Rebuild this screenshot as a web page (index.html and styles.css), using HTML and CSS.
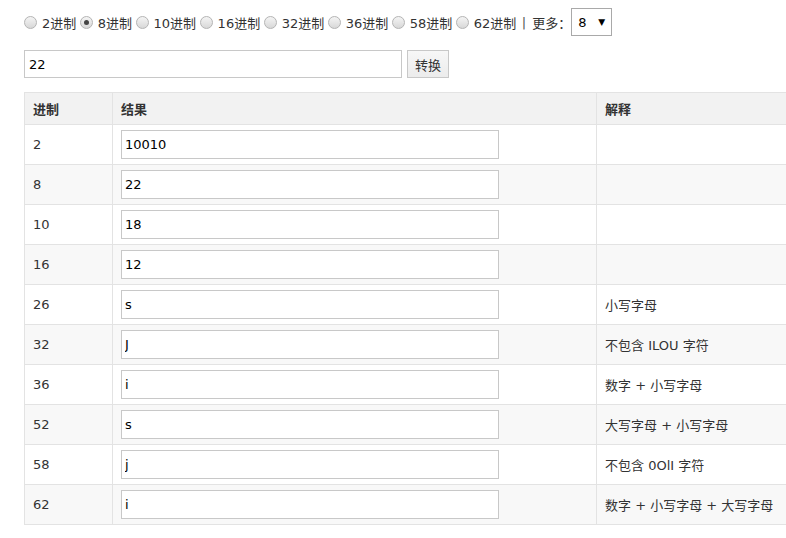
FILE: index.html
```html
<!DOCTYPE html>
<html lang="zh-CN">
<head>
    <meta charset="UTF-8">
    <title>进制转换</title>
    <link rel="stylesheet" href="styles.css">
</head>
<body>
    <div class="bases">
        <label><input type="radio" name="base"> 2进制</label>
        <label><input type="radio" name="base" checked> 8进制</label>
        <label><input type="radio" name="base"> 10进制</label>
        <label><input type="radio" name="base"> 16进制</label>
        <label><input type="radio" name="base"> 32进制</label>
        <label><input type="radio" name="base"> 36进制</label>
        <label><input type="radio" name="base"> 58进制</label>
        <label><input type="radio" name="base"> 62进制</label>
        <span class="sep">|</span>
        <span>更多：</span>
        <div class="more">8 <span class="arrow">&#9660;</span></div>
    </div>
    <div class="convert">
        <input type="text" class="source" value="22">
        <button class="btn">转换</button>
    </div>
    <table class="result">
        <colgroup>
            <col class="c1"><col class="c2"><col class="c3">
        </colgroup>
        <thead>
            <tr><th>进制</th><th>结果</th><th>解释</th></tr>
        </thead>
        <tbody>
            <tr><td>2</td><td><input type="text" value="10010"></td><td></td></tr>
            <tr><td>8</td><td><input type="text" value="22"></td><td></td></tr>
            <tr><td>10</td><td><input type="text" value="18"></td><td></td></tr>
            <tr><td>16</td><td><input type="text" value="12"></td><td></td></tr>
            <tr><td>26</td><td><input type="text" value="s"></td><td>小写字母</td></tr>
            <tr><td>32</td><td><input type="text" value="J"></td><td>不包含 ILOU 字符</td></tr>
            <tr><td>36</td><td><input type="text" value="i"></td><td>数字 + 小写字母</td></tr>
            <tr><td>52</td><td><input type="text" value="s"></td><td>大写字母 + 小写字母</td></tr>
            <tr><td>58</td><td><input type="text" value="j"></td><td>不包含 0OlI 字符</td></tr>
            <tr><td>62</td><td><input type="text" value="i"></td><td>数字 + 小写字母 + 大写字母</td></tr>
        </tbody>
    </table>
</body>
</html>
```

FILE: styles.css
```css
html, body {
    overflow: hidden;
}
body {
    margin: 0;
    padding: 8px 0 0 24px;
    font-family: "DejaVu Sans", Verdana, "Noto Sans CJK SC", sans-serif;
    font-size: 13px;
    color: #333;
    background: #fff;
}
.bases {
    display: flex;
    align-items: center;
    height: 28px;
    white-space: nowrap;
}
.bases label {
    display: flex;
    align-items: center;
    margin-right: 3.5px;
}
.bases input[type="radio"] {
    -webkit-appearance: none;
    appearance: none;
    width: 13px;
    height: 13px;
    margin: 0 5px 0 0;
    border: 1px solid #b4b4b4;
    border-radius: 50%;
    background: linear-gradient(#f4f4f4, #d8d8d8);
    position: relative;
}
.bases input[type="radio"]:checked::after {
    content: "";
    position: absolute;
    left: 3px;
    top: 3px;
    width: 5px;
    height: 5px;
    border-radius: 50%;
    background: #444;
}
.sep {
    margin: 0 6px 0 2px;
    color: #555;
}
.more {
    display: flex;
    align-items: center;
    justify-content: space-between;
    box-sizing: border-box;
    width: 41px;
    height: 28px;
    margin-left: 0;
    padding: 0 6px 0 6px;
    border: 1px solid #a9a9a9;
    color: #000;
}
.more .arrow {
    font-size: 9px;
}
.convert {
    display: flex;
    margin-top: 14px;
}
.source {
    box-sizing: border-box;
    width: 378px;
    height: 28px;
    padding: 0 4px;
    border: 1px solid #c8c8c8;
    font-family: inherit;
    font-size: 13px;
    color: #000;
}
.btn {
    box-sizing: border-box;
    height: 28px;
    width: 42px;
    margin-left: 5px;
    padding: 0;
    border: 1px solid #c8c8c8;
    background: linear-gradient(#f7f7f7, #ececec);
    font-family: inherit;
    font-size: 13px;
    color: #333;
}
.result {
    margin-top: 14px;
    border-collapse: collapse;
    table-layout: fixed;
    width: 800px;
}
.result .c1 { width: 88px; }
.result .c2 { width: 484px; }
.result .c3 { width: 228px; }
.result th, .result td {
    border: 1px solid #e3e3e3;
    text-align: left;
    padding: 0 8px;
    white-space: nowrap;
}
.result th {
    height: 31px;
    background: #f2f2f2;
    font-weight: bold;
    color: #333;
}
.result td {
    height: 39px;
}
.result tbody tr:nth-child(even) td {
    background: #f8f8f8;
}
.result td input {
    display: block;
    box-sizing: border-box;
    width: 378px;
    height: 29px;
    padding: 0 3px;
    border: 1px solid #c8c8c8;
    background: #fff;
    font-family: inherit;
    font-size: 13px;
    color: #000;
}
```
